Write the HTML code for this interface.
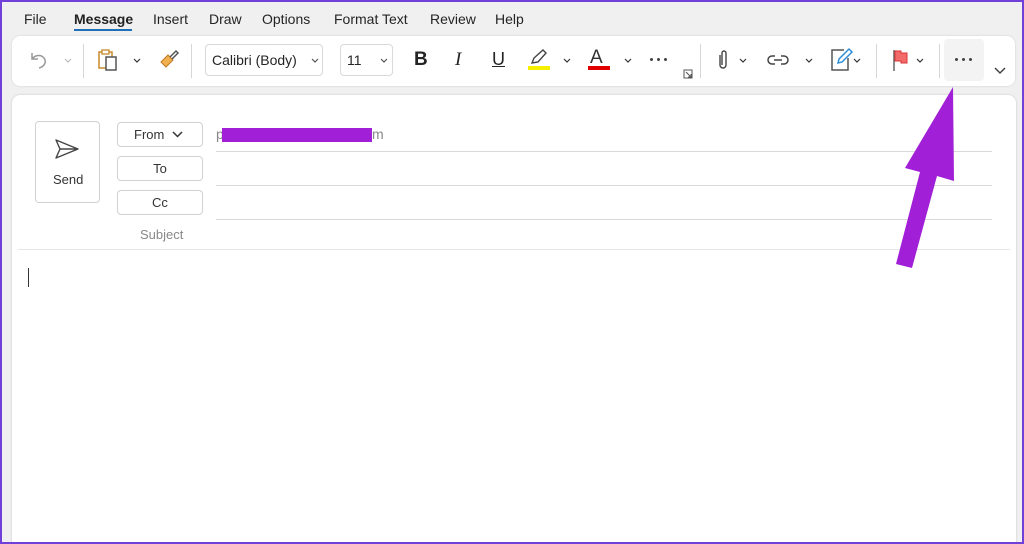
<!DOCTYPE html>
<html><head><meta charset="utf-8"><style>
*{box-sizing:border-box;margin:0;padding:0}
html,body{width:1024px;height:544px;overflow:hidden}
body{background:#f0f0f0;font-family:"Liberation Sans",sans-serif;position:relative;color:#242424}
.frame{position:absolute;left:0;top:0;width:1024px;height:544px;border:2px solid #7040d8;pointer-events:none;z-index:10}
.tabs{position:absolute;top:11px;left:0;font-size:14px}
.tabs span{position:absolute;white-space:nowrap}
.tb{position:absolute;left:12px;top:36px;width:1003px;height:50px;background:#fff;border-radius:8px;box-shadow:0 0 2px rgba(0,0,0,.15)}
.a{position:absolute}
.sep{position:absolute;width:1px;height:34px;background:#d6d6d6;top:44px}
.dd{position:absolute;border:1px solid #d9d9d9;border-radius:4px;height:32px;top:44px;font-size:14px;line-height:30px;padding-left:6px;background:#fff}
.compose{position:absolute;left:12px;top:95px;width:1004px;height:449px;background:#fff;border-radius:8px 8px 0 0;box-shadow:0 0 2px rgba(0,0,0,.18)}
.btn{position:absolute;border:1px solid #d1d1d1;border-radius:4px;background:#fff;font-size:13px;text-align:center;color:#333}
.line{position:absolute;height:1px;background:#d9d9d9}
.dots{position:absolute;width:18px;height:4px}
.dots i{position:absolute;top:0;width:3px;height:3px;border-radius:50%;background:#444}
</style></head><body>
<div class="tabs">
<span style="left:24px">File</span>
<span style="left:74px;font-weight:bold;color:#222">Message</span>
<span style="left:153px">Insert</span>
<span style="left:209px">Draw</span>
<span style="left:262px">Options</span>
<span style="left:334px">Format Text</span>
<span style="left:430px">Review</span>
<span style="left:495px">Help</span>
</div>
<div class="a" style="left:74px;top:29px;width:58px;height:2px;background:#1f6fb8"></div>
<div class="tb"></div>
<svg width="0" height="0" style="position:absolute"><defs><symbol id="cv" viewBox="0 0 8 5"><path d="M1 1l3 3 3-3" fill="none" stroke="currentColor" stroke-width="1.2"/></symbol></defs></svg>
<svg class="a" style="left:28px;top:50px" width="22" height="20" viewBox="0 0 22 20"><path d="M4 3v6h6M4 9c3-4 9-5 12-1 3 4 0 9-5 10" fill="none" stroke="#999" stroke-width="1.5"/></svg>
<svg class="a" style="left:64px;top:58px;color:#bbb" width="8" height="5"><use href="#cv"/></svg>
<div class="sep" style="left:83px"></div>
<svg class="a" style="left:97px;top:48px" width="22" height="24" viewBox="0 0 22 24"><rect x="2" y="4" width="13" height="16" fill="none" stroke="#c78a2c" stroke-width="1.5"/><rect x="5" y="2" width="7" height="4" fill="#fff" stroke="#c78a2c" stroke-width="1.3"/><rect x="9" y="9" width="10" height="13" fill="#fff" stroke="#555" stroke-width="1.5"/></svg>
<svg class="a" style="left:133px;top:58px;color:#333" width="8" height="5"><use href="#cv"/></svg>
<svg class="a" style="left:158px;top:49px" width="22" height="20" viewBox="0 0 22 20"><path d="M3 13l7-7 5 5-7 7z" fill="#f0b050" stroke="#c07a20"/><path d="M12 8l6-6 2 2-6 6" fill="none" stroke="#555" stroke-width="1.5"/></svg>
<div class="sep" style="left:191px"></div>
<div class="dd" style="left:205px;width:118px;color:#242424">Calibri (Body)</div><svg class="a" style="left:311px;top:58px;color:#555" width="8" height="5"><use href="#cv"/></svg>
<div class="dd" style="left:340px;width:53px">11</div><svg class="a" style="left:380px;top:58px;color:#555" width="8" height="5"><use href="#cv"/></svg>
<div class="a" style="left:414px;top:49px;font-weight:bold;font-size:19px">B</div>
<div class="a" style="left:455px;top:49px;font-style:italic;font-size:19px;font-family:'Liberation Serif',serif">I</div>
<div class="a" style="left:492px;top:49px;font-size:18px;text-decoration:underline">U</div>
<svg class="a" style="left:527px;top:47px" width="24" height="24" viewBox="0 0 24 24"><path d="M5 16l2-5 9-8 3 3-8 9z" fill="none" stroke="#444" stroke-width="1.4"/><rect x="1" y="19" width="22" height="4" fill="#f5f000"/></svg>
<svg class="a" style="left:563px;top:58px;color:#333" width="8" height="5"><use href="#cv"/></svg>
<div class="a" style="left:590px;top:47px;font-size:19px;color:#333">A</div>
<div class="a" style="left:588px;top:66px;width:22px;height:4px;background:#e00000"></div>
<svg class="a" style="left:624px;top:58px;color:#333" width="8" height="5"><use href="#cv"/></svg>
<div class="dots" style="left:650px;top:58px"><i style="left:0"></i><i style="left:7px"></i><i style="left:14px"></i></div>
<svg class="a" style="left:683px;top:69px" width="10" height="10" viewBox="0 0 10 10"><path d="M1 1h8v8H1zM3 3l5 5M5 8h3V5" fill="none" stroke="#555" stroke-width="1"/></svg>
<div class="sep" style="left:700px"></div>
<svg class="a" style="left:716px;top:49px" width="14" height="22" viewBox="0 0 14 22"><path d="M4 6v10a3 3 0 006 0V4a2 2 0 00-4 0v12" fill="none" stroke="#444" stroke-width="1.4"/></svg>
<svg class="a" style="left:739px;top:58px;color:#333" width="8" height="5"><use href="#cv"/></svg>
<svg class="a" style="left:766px;top:52px" width="24" height="16" viewBox="0 0 24 16"><path d="M9 4H6a4 4 0 000 8h3M15 4h3a4 4 0 010 8h-3M8 8h8" fill="none" stroke="#444" stroke-width="1.5"/></svg>
<svg class="a" style="left:805px;top:58px;color:#333" width="8" height="5"><use href="#cv"/></svg>
<svg class="a" style="left:830px;top:46px" width="24" height="26" viewBox="0 0 24 26"><path d="M14 4H2v20h16V12" fill="none" stroke="#555" stroke-width="1.5"/><path d="M8 17l1-4 10-10 3 3-10 10z" fill="none" stroke="#2f8fd8" stroke-width="1.5"/></svg>
<svg class="a" style="left:853px;top:58px;color:#333" width="8" height="5"><use href="#cv"/></svg>
<div class="sep" style="left:876px"></div>
<svg class="a" style="left:891px;top:48px" width="20" height="24" viewBox="0 0 20 24"><path d="M3 2v21" stroke="#666" stroke-width="1.5"/><path d="M4 3h6v2h6v10h-6v-2H4z" fill="#f26b6b" stroke="#d33"/></svg>
<svg class="a" style="left:916px;top:58px;color:#333" width="8" height="5"><use href="#cv"/></svg>
<div class="sep" style="left:939px"></div>
<div class="a" style="left:944px;top:39px;width:40px;height:42px;background:#f3f3f3;border-radius:4px"></div>
<div class="dots" style="left:955px;top:58px"><i style="left:0"></i><i style="left:7px"></i><i style="left:14px"></i></div>
<svg class="a" style="left:994px;top:67px" width="12" height="8" viewBox="0 0 12 8"><path d="M1 1l5 5 5-5" fill="none" stroke="#444" stroke-width="1.5"/></svg>

<div class="compose"></div>
<div class="btn" style="left:35px;top:121px;width:65px;height:82px"></div>
<svg class="a" style="left:54px;top:138px" width="26" height="22" viewBox="0 0 26 22"><path d="M2 2l22 9-22 9 4-9zM6 11h18" fill="none" stroke="#444" stroke-width="1.4" stroke-linejoin="round"/></svg>
<div class="a" style="left:53px;top:172px;font-size:13px;color:#333">Send</div>
<div class="btn" style="left:117px;top:122px;width:86px;height:25px;line-height:23px;text-align:left;padding-left:16px">From</div>
<svg class="a" style="left:172px;top:131px" width="11" height="8" viewBox="0 0 11 8"><path d="M1 1l4.5 4.5L10 1" fill="none" stroke="#333" stroke-width="1.5"/></svg>
<div class="btn" style="left:117px;top:156px;width:86px;height:25px;line-height:23px">To</div>
<div class="btn" style="left:117px;top:190px;width:86px;height:25px;line-height:23px">Cc</div>
<div class="a" style="left:140px;top:227px;font-size:13px;color:#888">Subject</div>
<div class="a" style="left:216px;top:126px;font-size:14px;color:#888">p</div>
<div class="a" style="left:222px;top:128px;width:150px;height:14px;background:#a11fd6"></div>
<div class="a" style="left:372px;top:126px;font-size:14px;color:#888">m</div>
<div class="line" style="left:216px;top:151px;width:776px"></div>
<div class="line" style="left:216px;top:185px;width:776px"></div>
<div class="line" style="left:216px;top:219px;width:776px"></div>
<div class="line" style="left:18px;top:249px;width:992px;background:#e6e6e6"></div>
<div class="a" style="left:28px;top:268px;width:1px;height:19px;background:#333"></div>

<svg class="a" style="left:0;top:0;z-index:5" width="1024" height="544"><polygon points="953,87 954,181 937,176 912,268 896,264 920,172 905,168" fill="#a11fd6"/></svg>
<div class="frame"></div>
</body></html>
